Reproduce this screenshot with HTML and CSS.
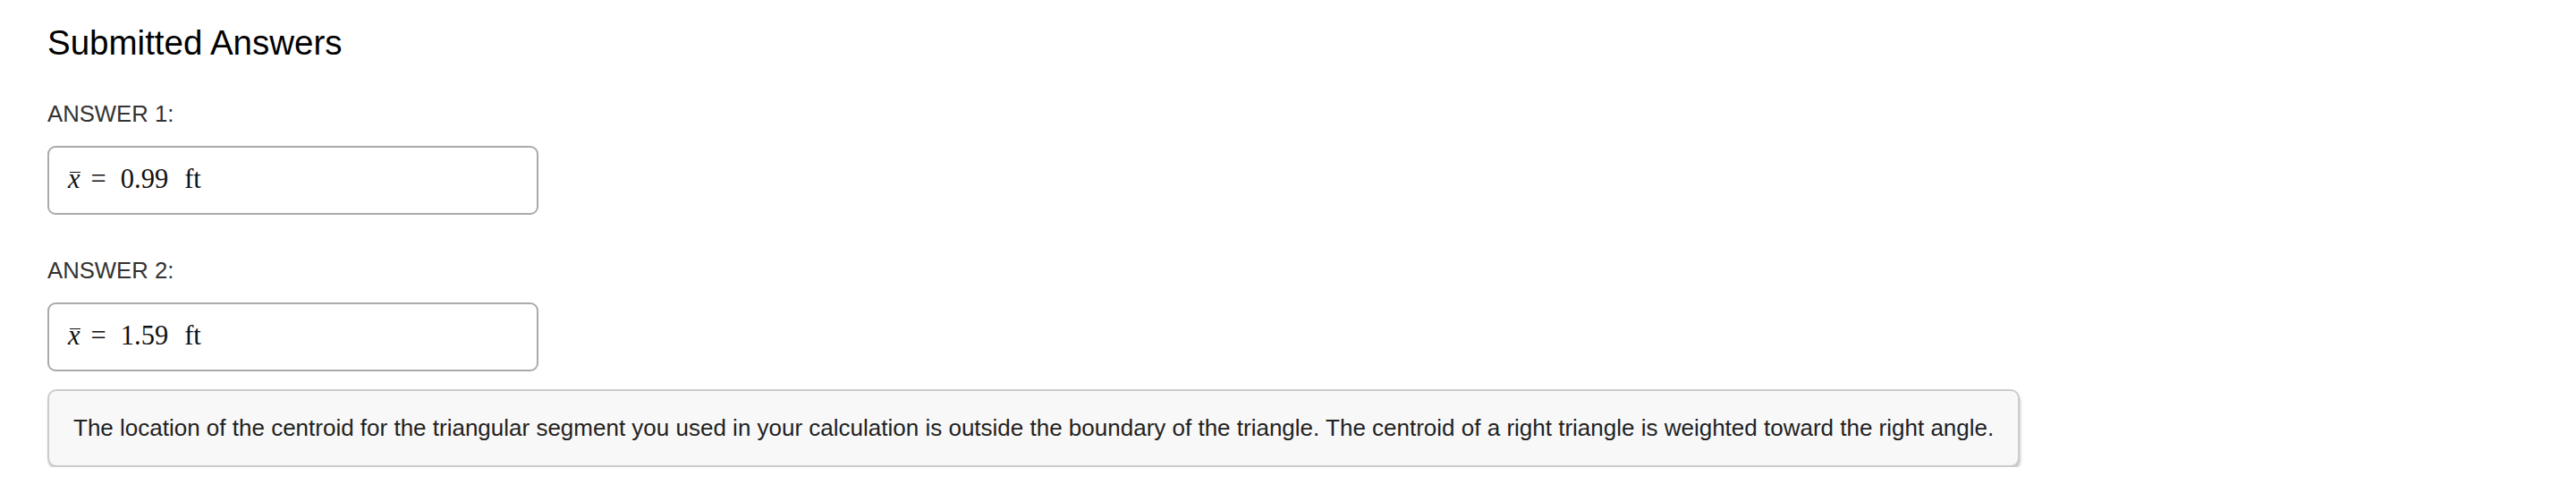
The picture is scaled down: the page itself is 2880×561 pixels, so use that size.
FILE: index.html
```html
<!DOCTYPE html>
<html>
<head lang="en">
    <meta charset="UTF-8">
    <title>Submitted Answers</title>
    <link rel="stylesheet" href="styles.css">
</head>
<body>
<div id="answers">
    <h1 class="title">Submitted Answers</h1>

    <div class="answer">
        <div class="answer-label">ANSWER 1:</div>
        <div class="answer-box">
            <span class="xbar">x</span><span class="eq">=</span><span class="num">0.99</span><span class="unit">ft</span>
        </div>
    </div>

    <div class="answer">
        <div class="answer-label">ANSWER 2:</div>
        <div class="answer-box">
            <span class="xbar">x</span><span class="eq">=</span><span class="num">1.59</span><span class="unit">ft</span>
        </div>
    </div>

    <div class="feedback">
        The location of the centroid for the triangular segment you used in your calculation is outside the boundary of the triangle. The centroid of a right triangle is weighted toward the right angle.
    </div>
</div>
</body>
</html>
```

FILE: styles.css
```css
* {
    padding: 0;
    margin: 0;
    box-sizing: border-box;
}

body {
    background: #ffffff;
    font-family: "Liberation Sans", Arial, Helvetica, sans-serif;
    color: #333333;
}

#answers {
    padding: 25px 0 0 53px;
}

.title {
    font-size: 38.5px;
    line-height: 46px;
    font-weight: normal;
    color: #000000;
}

.answer {
    margin-top: 41px;
}

.answer + .answer {
    margin-top: 47px;
}

.answer-label {
    font-size: 25.7px;
    line-height: 30px;
    color: #333333;
}

.answer-box {
    margin-top: 21px;
    width: 549px;
    height: 77px;
    border: 2px solid #aaaaaa;
    border-radius: 9px;
    padding: 0 20px 3px 21px;
    display: flex;
    align-items: center;
    font-family: "Liberation Serif", "Times New Roman", serif;
    font-size: 30.5px;
    line-height: 33px;
    color: #111111;
}

/* x with a bar accent on top */
.xbar {
    position: relative;
    font-style: italic;
}

.xbar::after {
    content: "";
    position: absolute;
    left: 2px;
    right: 0;
    top: 8px;
    height: 1.5px;
    background: #111111;
}

.eq {
    margin-left: 12px;
}

.num {
    margin-left: 16px;
}

.unit {
    margin-left: 18px;
}

.feedback {
    margin-top: 20px;
    width: fit-content;
    padding: 26px 27px 27px 27px;
    border: 2px solid #cccccc;
    border-radius: 10px;
    background: #f8f8f8;
    box-shadow: 1px 3px 3px rgba(0, 0, 0, 0.22);
    font-size: 26px;
    line-height: 30px;
    color: #222222;
}
```
